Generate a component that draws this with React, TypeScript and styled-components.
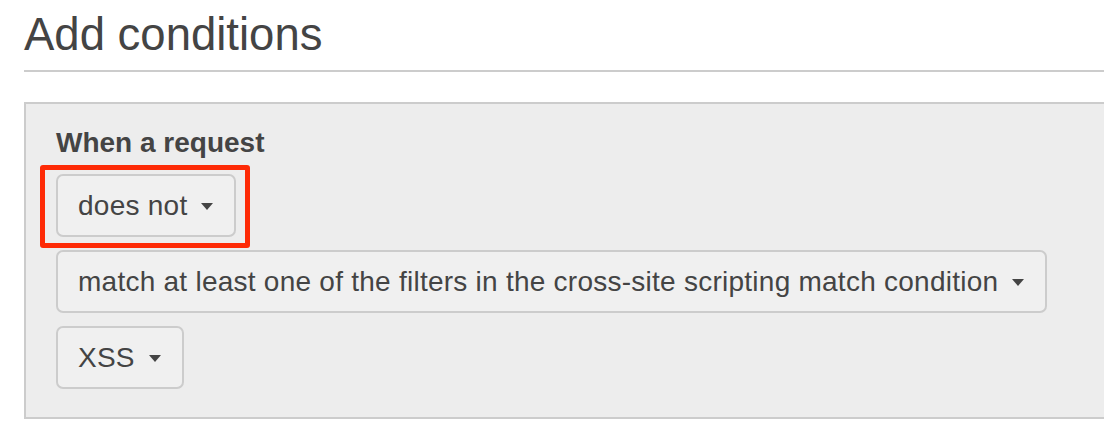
import React from "react";
import styled, { createGlobalStyle } from "styled-components";

const GlobalStyle = createGlobalStyle`
  html, body {
    margin: 0;
    padding: 0;
    background: #ffffff;
    overflow: hidden;
  }
  body {
    font-family: "Liberation Sans", Arial, Helvetica, sans-serif;
    color: #444444;
  }
`;

const Page = styled.div`
  padding-left: 24px;
  width: 1104px;
  box-sizing: border-box;
`;

const Heading = styled.h1`
  margin: 0;
  padding: 10px 0 10px 0;
  font-size: 45.5px;
  line-height: 50px;
  font-weight: 400;
  color: #444444;
  border-bottom: 2px solid #cccccc;
`;

const Panel = styled.section`
  margin-top: 30px;
  margin-right: -12px;
  background: #ededed;
  border: 2px solid #cccccc;
  padding: 23px 30px 28px 30px;
  display: flex;
  flex-direction: column;
  align-items: flex-start;
`;

const Label = styled.div`
  font-size: 28px;
  line-height: 32px;
  font-weight: 700;
  color: #444444;
  margin-bottom: 15px;
`;

const Stack = styled.div`
  display: flex;
  flex-direction: column;
  align-items: flex-start;
  gap: 13px;
`;

const Highlighted = styled.div`
  position: relative;
  &::after {
    content: "";
    position: absolute;
    left: -16px;
    top: -9px;
    right: -14px;
    bottom: -11px;
    border: 5px solid #fe2a06;
    border-radius: 3px;
    pointer-events: none;
  }
`;

const Dropdown = styled.button`
  display: inline-flex;
  align-items: center;
  height: 63px;
  box-sizing: border-box;
  padding: 0 21px 0 20px;
  background: #f0f0f0;
  border: 2px solid #cccccc;
  border-radius: 7px;
  font-family: "Liberation Sans", Arial, Helvetica, sans-serif;
  font-size: 28px;
  line-height: 32px;
  letter-spacing: 0.25px;
  color: #444444;
  white-space: nowrap;
  cursor: pointer;
`;

const Caret = styled.span`
  display: inline-block;
  width: 0;
  height: 0;
  margin-left: 14px;
  margin-top: 1px;
  border-left: 6.5px solid transparent;
  border-right: 6.5px solid transparent;
  border-top: 7px solid #444444;
`;

type SelectProps = { label: string };

const Select: React.FC<SelectProps> = ({ label }) => (
  <Dropdown type="button">
    {label}
    <Caret />
  </Dropdown>
);

export default function App() {
  return (
    <>
      <GlobalStyle />
      <Page>
        <Heading>Add conditions</Heading>
        <Panel>
          <Label>When a request</Label>
          <Stack>
            <Highlighted>
              <Select label="does not" />
            </Highlighted>
            <Select label="match at least one of the filters in the cross-site scripting match condition" />
            <Select label="XSS" />
          </Stack>
        </Panel>
      </Page>
    </>
  );
}
